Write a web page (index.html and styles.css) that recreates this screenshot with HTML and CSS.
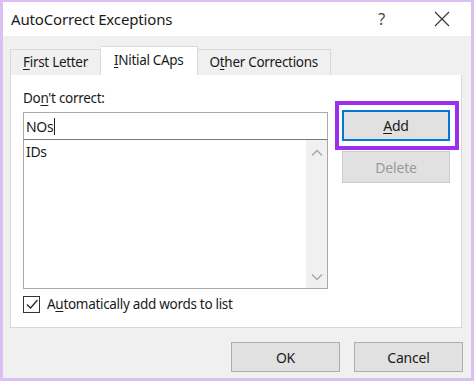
FILE: index.html
```html
<!DOCTYPE html>
<html lang="en">
<head>
    <meta charset="UTF-8">
    <title>AutoCorrect Exceptions</title>
    <link rel="stylesheet" href="styles.css">
</head>
<body>
    <div class="window">
        <!-- Title bar -->
        <div class="titlebar">
            <span class="title">AutoCorrect Exceptions</span>
            <span class="help">?</span>
            <svg class="close" width="16" height="16" viewBox="0 0 16 16">
                <path d="M1 1 L15 15 M15 1 L1 15" stroke="#333" stroke-width="1.1" fill="none"/>
            </svg>
        </div>

        <div class="dialog-body">
            <!-- Tabs -->
            <div class="tabs">
                <div class="tab"><u>F</u>irst Letter</div>
                <div class="tab active"><u>I</u>Nitial CAps</div>
                <div class="tab">O<u>t</u>her Corrections</div>
            </div>

            <!-- Tab panel -->
            <div class="panel">
                <div class="panel-main">
                    <div class="left-col">
                        <div class="field-label">Do<u>n</u>'t correct:</div>
                        <div class="text-input">NOs<span class="caret"></span></div>
                        <div class="list">
                            <div class="list-items">
                                <div class="list-item">IDs</div>
                            </div>
                            <div class="scrollbar">
                                <svg width="12" height="8" viewBox="0 0 12 8">
                                    <path d="M1 6.5 L6 1.5 L11 6.5" stroke="#a6a6a6" stroke-width="1.3" fill="none"/>
                                </svg>
                                <svg width="12" height="8" viewBox="0 0 12 8">
                                    <path d="M1 1.5 L6 6.5 L11 1.5" stroke="#a6a6a6" stroke-width="1.3" fill="none"/>
                                </svg>
                            </div>
                        </div>
                    </div>
                    <div class="right-col">
                        <button class="btn btn-add"><u>A</u>dd</button>
                        <button class="btn btn-disabled">Delete</button>
                    </div>
                </div>

                <div class="check-row">
                    <span class="checkbox">
                        <svg width="14" height="14" viewBox="0 0 14 14">
                            <path d="M2 7.5 L5.5 11 L12.5 3" stroke="#222" stroke-width="1.2" fill="none"/>
                        </svg>
                    </span>
                    <span>A<u>u</u>tomatically add words to list</span>
                </div>
            </div>

            <!-- Dialog buttons -->
            <div class="footer">
                <button class="btn btn-footer">OK</button>
                <button class="btn btn-footer">Cancel</button>
            </div>
        </div>
    </div>
</body>
</html>
```

FILE: styles.css
```css
/* Global Styles */
* {
    margin: 0;
    padding: 0;
    box-sizing: border-box;
}

body {
    font-family: 'Noto Sans', 'Open Sans', sans-serif;
    background-color: #dcbff3;
    color: #1a1a1a;
    letter-spacing: -0.3px;
}

u {
    text-decoration-thickness: 1px;
    text-underline-offset: 2px;
}

.window {
    width: 474px;
    height: 381px;
    border: 3px solid #dcbff3;
    border-top-width: 2px;
    display: flex;
    flex-direction: column;
}

/* Title bar */
.titlebar {
    height: 34px;
    background-color: #ffffff;
    display: flex;
    align-items: center;
    padding-left: 8px;
}

.title {
    font-size: 15px;
    letter-spacing: -0.15px;
    color: #1a1a1a;
    flex: 1;
}

.help {
    font-size: 16px;
    color: #444;
    margin-right: 49px;
}

.close {
    margin-right: 21px;
}

/* Body */
.dialog-body {
    flex: 1;
    background-color: #f0f0f0;
    padding: 10px 9px 0 7px;
}

.tabs {
    display: flex;
    height: 29px;
    align-items: flex-end;
}

.tab {
    height: 26px;
    padding: 0 12px;
    font-size: 13.5px;
    line-height: 24px;
    border: 1px solid #d9d9d9;
    border-bottom: none;
    background-color: #f0f0f0;
    color: #1a1a1a;
}

.tab + .tab {
    border-left: none;
}

.tab.active {
    height: 29px;
    line-height: 27px;
    background-color: #ffffff;
    padding: 0 13px;
}

.panel {
    height: 253px;
    background-color: #ffffff;
    border: 1px solid #d9d9d9;
    border-top: none;
    padding: 0 11px 0 12px;
}

.panel-main {
    display: flex;
    gap: 14px;
}

.left-col {
    width: 305px;
}

.field-label {
    font-size: 13.5px;
    line-height: 20px;
    margin-top: 13px;
}

.text-input {
    margin-top: 4px;
    height: 28px;
    border: 1px solid #a9a9a9;
    border-bottom-color: #7a7a7a;
    font-size: 14px;
    line-height: 25px;
    padding-left: 2px;
    display: flex;
    align-items: center;
}

.caret {
    display: inline-block;
    width: 1px;
    height: 17px;
    background-color: #222;
    margin-left: 1px;
}

.list {
    height: 149px;
    border: 1px solid #a9a9a9;
    border-top: none;
    display: flex;
}

.list-items {
    flex: 1;
    padding: 2px 2px;
    font-size: 14px;
    line-height: 20px;
}

.scrollbar {
    width: 21px;
    background-color: #f0f0f0;
    display: flex;
    flex-direction: column;
    justify-content: space-between;
    align-items: center;
    padding: 9px 0 7px;
}

.right-col {
    display: flex;
    flex-direction: column;
    gap: 10px;
    padding-top: 35px;
}

/* Buttons */
.btn {
    font-family: inherit;
    font-size: 14px;
    letter-spacing: -0.2px;
    color: #1a1a1a;
    background-color: #e1e1e1;
    border: 1px solid #adadad;
    width: 108px;
    height: 31px;
}

.btn-add {
    position: relative;
    border: 2px solid #0078d7;
}

/* purple annotation frame around the Add button */
.btn-add::after {
    content: "";
    position: absolute;
    top: -11px;
    left: -9px;
    right: -11px;
    bottom: -11px;
    border: 4px solid #9a2ff0;
}

.btn-disabled {
    color: #9a9a9a;
    border-color: #cccccc;
    height: 32px;
}

.check-row {
    display: flex;
    align-items: center;
    gap: 7px;
    margin-top: 6px;
    font-size: 13.5px;
}

.checkbox {
    width: 17px;
    height: 17px;
    border: 1px solid #333;
    display: flex;
    align-items: center;
    justify-content: center;
}

.footer {
    display: flex;
    justify-content: flex-end;
    gap: 14px;
    margin-top: 14px;
    margin-right: -1px;
}

.btn-footer {
    width: 109px;
    height: 30px;
}
```
